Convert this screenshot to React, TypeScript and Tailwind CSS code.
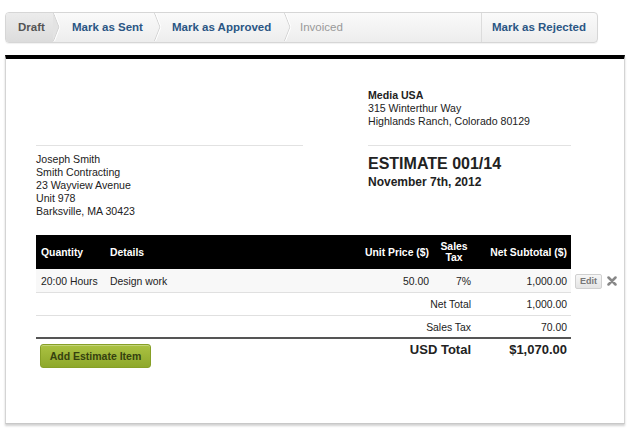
import React from "react";

function Chevron({ fill }: { fill?: string }) {
  return (
    <svg width="7" height="28" viewBox="0 0 7 28" className="shrink-0 block">
      {fill && <polygon points="0,0 6,14 0,28" fill={fill} />}
      <polyline points="0.5,0 6,14 0.5,28" fill="none" stroke="#d2d2d2" strokeWidth="1" />
      <polyline points="1.5,0 7,14 1.5,28" fill="none" stroke="#ffffff" strokeWidth="1" />
    </svg>
  );
}

function Row({
  cells,
  className,
}: {
  cells: React.ReactNode[];
  className?: string;
}) {
  return (
    <div className={"grid grid-cols-[69px_255px_73px_42px_96px] w-[535px] " + (className || "")}>
      {cells.map((c, i) => (
        <div key={i} className={i < 2 ? "pl-[5px]" : "text-right pr-[4px]"}>
          {c}
        </div>
      ))}
    </div>
  );
}

export default function App() {
  return (
    <div
      className="w-[640px] h-[444px] bg-white text-[#222] overflow-hidden"
      style={{ fontFamily: '"Liberation Sans", Arial, Helvetica, sans-serif' }}
    >
      <div className="pt-[12px] pl-[5px]">
        <div className="w-[593px] h-[31px] flex items-stretch border border-[#d6d6d6] rounded-[4px] bg-gradient-to-b from-[#fafafa] to-[#ededed] shadow-[0_1px_1px_rgba(0,0,0,0.06)] text-[11.5px] font-bold overflow-hidden">
          <div className="w-[47px] pl-[12px] pt-[1px] flex items-center text-[#555] bg-gradient-to-b from-[#ececec] to-[#dcdcdc]">
            Draft
          </div>
          <Chevron fill="#e3e3e3" />
          <div className="w-[94px] pl-[12px] pt-[1px] flex items-center text-[#2b5684]">Mark as Sent</div>
          <Chevron />
          <div className="w-[123px] pl-[11px] pt-[1px] flex items-center text-[#2b5684]">Mark as Approved</div>
          <Chevron />
          <div className="flex-1 pl-[9px] pt-[1px] flex items-center text-[#999] font-normal">Invoiced</div>
          <div className="w-[116px] pl-[10px] pt-[1px] flex items-center border-l border-[#dcdcdc] text-[#2b5684]">
            Mark as Rejected
          </div>
        </div>
      </div>

      <div className="mt-[12px] ml-[5px] w-[620px] h-[369px] border-t-[4px] border-t-black border-x border-x-[#d4d4d4] border-b border-b-[#c8c8c8] shadow-[0_2px_2px_rgba(0,0,0,0.18)] pl-[30px] pt-[30px] text-[10.6px] leading-[13px]">
        <div className="grid grid-cols-[267px_203px] gap-x-[65px]">
          <div className="border-b border-[#e2e2e2]" />
          <div className="border-b border-[#e2e2e2] pb-[17px]">
            <div className="font-bold">Media USA</div>
            <div>315 Winterthur Way</div>
            <div>Highlands Ranch, Colorado 80129</div>
          </div>
          <div className="pt-[7px]">
            <div>Joseph Smith</div>
            <div>Smith Contracting</div>
            <div>23 Wayview Avenue</div>
            <div>Unit 978</div>
            <div>Barksville, MA 30423</div>
          </div>
          <div className="pt-[9px]">
            <div className="text-[16px] leading-[18px] font-bold">ESTIMATE 001/14</div>
            <div className="mt-[2px] text-[12px] leading-[14px] font-bold">November 7th, 2012</div>
          </div>
        </div>

        <div className="mt-[17px] text-[10.4px]">
          <Row
            className="h-[34px] bg-black text-white font-bold items-center"
            cells={[
              "Quantity",
              "Details",
              "Unit Price ($)",
              <div className="text-center leading-[11px] -mr-[4px]">
                Sales
                <br />
                Tax
              </div>,
              "Net Subtotal ($)",
            ]}
          />
          <div className="flex items-center">
            <Row
              className="h-[24px] pt-[1px] bg-[#f8f8f8] border-b border-[#e0e0e0] items-center"
              cells={["20:00 Hours", "Design work", "50.00", "7%", "1,000.00"]}
            />
            <button className="ml-[4px] w-[27px] h-[15px] rounded-[2px] border border-[#d0d0d0] bg-gradient-to-b from-[#f7f7f7] to-[#e4e4e4] text-[9px] leading-[13px] font-bold text-[#777]">
              Edit
            </button>
            <svg width="10" height="10" viewBox="0 0 10 10" className="ml-[5px]">
              <path d="M1.5 1.5 L8.5 8.5 M8.5 1.5 L1.5 8.5" stroke="#888" strokeWidth="2.5" strokeLinecap="round" />
            </svg>
          </div>
          <div className="w-[535px] h-[23px] pt-[1px] border-b border-[#e0e0e0] flex items-center">
            <div className="w-[439px] text-right pr-[4px]">Net Total</div>
            <div className="flex-1 text-right pr-[4px]">1,000.00</div>
          </div>
          <div className="w-[535px] h-[23px] pt-[1px] border-b-2 border-[#555] flex items-center">
            <div className="w-[439px] text-right pr-[4px]">Sales Tax</div>
            <div className="flex-1 text-right pr-[4px]">70.00</div>
          </div>
          <div className="w-[535px] flex items-start">
            <div className="w-[439px] flex items-start">
              <button className="ml-[4px] mt-[5px] w-[111px] h-[24px] rounded-[3px] border border-[#87a027] bg-gradient-to-b from-[#abc242] to-[#8ea82b] text-[10.5px] font-bold text-[#35410f] shadow-[inset_0_1px_0_rgba(255,255,255,0.3)]">
                Add Estimate Item
              </button>
              <div className="flex-1 text-right pr-[4px] pt-[3px] text-[13px] leading-[16px] font-bold">USD Total</div>
            </div>
            <div className="flex-1 text-right pr-[4px] pt-[3px] text-[13px] leading-[16px] font-bold">$1,070.00</div>
          </div>
        </div>
      </div>
    </div>
  );
}
